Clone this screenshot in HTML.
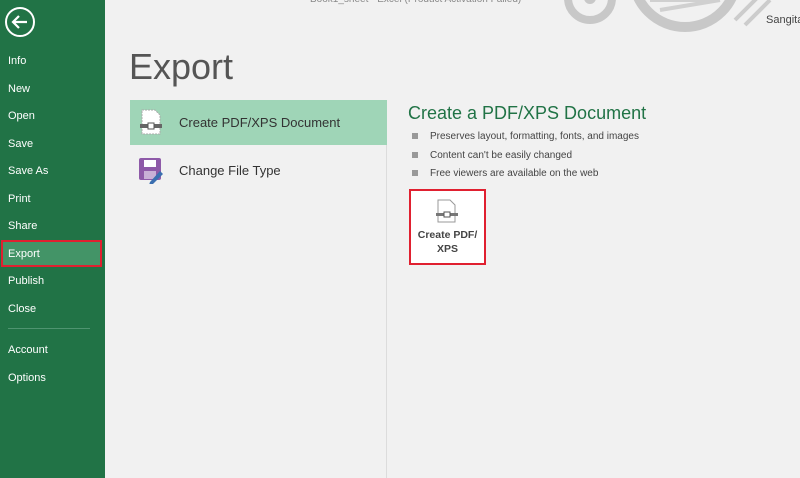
<!DOCTYPE html>
<html><head><style>
*{margin:0;padding:0;box-sizing:border-box}
body{width:800px;height:478px;background:#f1f1f1;font-family:"Liberation Sans",sans-serif;position:relative;overflow:hidden}
.sb{position:absolute;left:0;top:0;width:105px;height:478px;background:#217346}
.sb div{position:absolute;left:8px;color:#fff;font-size:11px}
.abs{position:absolute}
</style></head><body>
<div class="sb">
<svg class="abs" style="left:4px;top:6px" width="32" height="32"><circle cx="16" cy="16" r="14" fill="none" stroke="#fff" stroke-width="2"/><path d="M23 16H10M15 10l-6 6 6 6" fill="none" stroke="#fff" stroke-width="2.2"/></svg>
<div style="top:55px">Info</div>
<div style="top:83px">New</div>
<div style="top:110px">Open</div>
<div style="top:138px">Save</div>
<div style="top:165px">Save As</div>
<div style="top:193px">Print</div>
<div style="top:220px">Share</div>
<div style="left:1px;top:240px;width:101px;height:27px;background:#439467;border:2px solid #e02030"></div>
<div style="top:248px">Export</div>
<div style="top:275px">Publish</div>
<div style="top:303px">Close</div>
<div style="top:328px;width:82px;height:1px;background:#4f9470"></div>
<div style="top:344px">Account</div>
<div style="top:372px">Options</div>
</div>
<div class="abs" style="left:310px;top:-6px;font-size:10px;color:#888">Book1_sheet - Excel (Product Activation Failed)</div>
<svg class="abs" style="left:560px;top:0" width="240" height="32"><circle cx="30" cy="-2" r="22" fill="none" stroke="#c8c8c8" stroke-width="8"/><circle cx="30" cy="-2" r="6" fill="#c8c8c8"/><circle cx="125" cy="-25" r="52" fill="none" stroke="#c8c8c8" stroke-width="10"/><path d="M90 0l70 0M100 10l60-10" stroke="#d0d0d0" stroke-width="4"/><path d="M175 20l25-25M185 25l25-25" stroke="#ccc" stroke-width="4"/></svg>
<div class="abs" style="left:766px;top:14px;font-size:11px;color:#444">Sangita</div>
<div class="abs" style="left:129px;top:46px;font-size:36px;color:#555">Export</div>
<div class="abs" style="left:386px;top:100px;width:1px;height:378px;background:#dcdcdc"></div>
<div class="abs" style="left:130px;top:100px;width:257px;height:45px;background:#9fd5b7"></div>
<svg class="abs" style="left:140px;top:109px" width="22" height="26"><path d="M2 1h13l5 5v19H2z" fill="#fff" stroke="#aaa" stroke-dasharray="2 1"/><rect x="0" y="15" width="22" height="4" fill="#666"/><rect x="8" y="14" width="6" height="6" fill="#fff" stroke="#555"/></svg>
<div class="abs" style="left:179px;top:115px;font-size:13px;color:#333">Create PDF/XPS Document</div>
<svg class="abs" style="left:139px;top:158px" width="24" height="26"><rect x="0" y="0" width="22" height="22" rx="2" fill="#8e5aa8"/><rect x="5" y="2" width="12" height="7" fill="#fff"/><rect x="5" y="13" width="12" height="8" fill="#c9b0d6"/><path d="M11 24l10-11 3 3-10 10-4 1z" fill="#3b6fb0"/></svg>
<div class="abs" style="left:179px;top:163px;font-size:13px;color:#333">Change File Type</div>
<div class="abs" style="left:408px;top:103px;font-size:18px;color:#217346">Create a PDF/XPS Document</div>
<div class="abs" style="left:412px;top:128px;font-size:10px;color:#444;line-height:18.5px">
<div><span style="display:inline-block;width:6px;height:6px;background:#999;margin-right:12px"></span>Preserves layout, formatting, fonts, and images</div>
<div><span style="display:inline-block;width:6px;height:6px;background:#999;margin-right:12px"></span>Content can't be easily changed</div>
<div><span style="display:inline-block;width:6px;height:6px;background:#999;margin-right:12px"></span>Free viewers are available on the web</div>
</div>
<div class="abs" style="left:409px;top:189px;width:77px;height:76px;background:#fff;border:2px solid #e02030"></div>
<svg class="abs" style="left:436px;top:199px" width="22" height="24"><path d="M2 1h12l5 5v17H2z" fill="#fff" stroke="#999"/><rect x="0" y="14" width="22" height="3" fill="#777"/><rect x="8" y="13" width="6" height="5" fill="#fff" stroke="#555"/></svg>
<div class="abs" style="left:411px;top:228px;width:73px;text-align:center;font-size:10.5px;font-weight:bold;color:#444;line-height:14px">Create PDF/<br>XPS</div>
</body></html>
